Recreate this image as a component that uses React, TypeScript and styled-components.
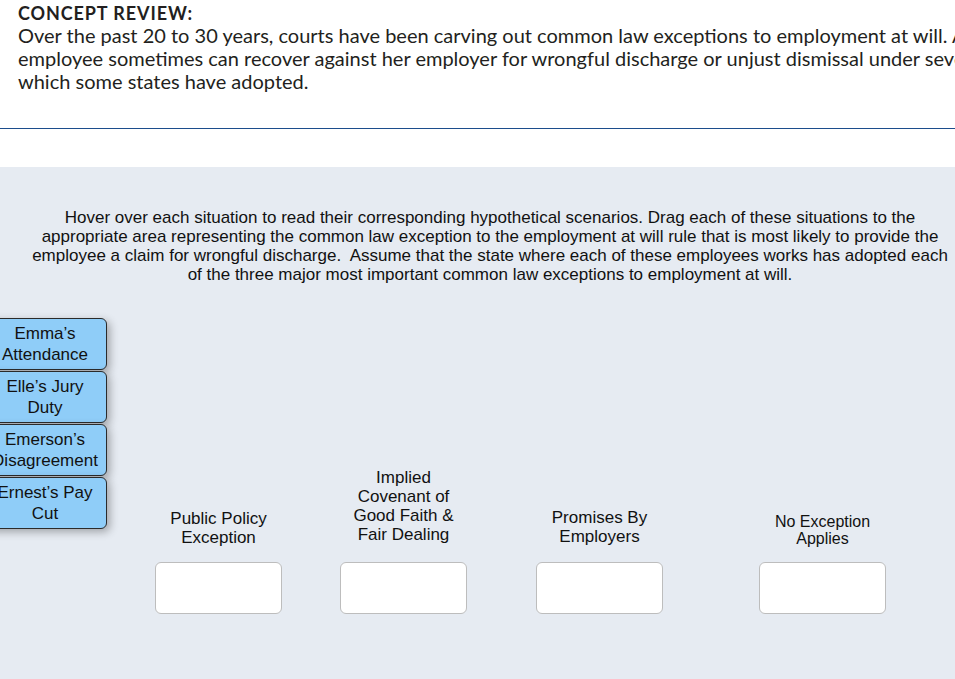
import styled, { createGlobalStyle } from "styled-components";

const GlobalStyle = createGlobalStyle`
  html, body { margin: 0; padding: 0; overflow: hidden; background: #fff; }
  #root { width: 980px; }
`;

const Page = styled.div`
  width: 980px;
  min-height: 100vh;
  display: flex;
  flex-direction: column;
`;

const Review = styled.section`
  padding: 2px 0 0 18px;
  font-family: Lato, "Open Sans", sans-serif;
  color: #231f20;
  white-space: nowrap;
  overflow: hidden;
`;

const ReviewTitle = styled.h3`
  margin: 0;
  font-size: 18px;
  line-height: 22px;
  font-weight: 700;
  letter-spacing: 0.9px;
`;

const ReviewText = styled.p`
  margin: 0;
  font-size: 20px;
  line-height: 23px;
`;

const Divider = styled.hr`
  margin: 35px 0 0;
  border: 0;
  border-top: 1px solid #1c4d8c;
  width: 955px;
`;

const Activity = styled.section`
  flex: 1;
  margin-top: 38px;
  background: #e6ebf2;
  padding-top: 41px;
  font-family: "Liberation Sans", Arial, sans-serif;
  color: #111;
`;

const Instructions = styled.p`
  margin: 0;
  text-align: center;
  font-size: 17px;
  line-height: 19px;
  white-space: nowrap;
`;

const Board = styled.div`
  display: flex;
  align-items: flex-start;
  margin-top: 34px;
`;

const TileStack = styled.div`
  display: flex;
  flex-direction: column;
  gap: 1px;
  margin-left: -17px;
  width: 124px;
`;

const Tile = styled.div`
  box-sizing: border-box;
  height: 52px;
  padding: 4px 4px 0;
  background: #8fcdf8;
  border: 1px solid #2b2b2b;
  border-radius: 6px;
  box-shadow: 3px 3px 8px rgba(0, 0, 0, 0.3);
  text-align: center;
  font-size: 17px;
  line-height: 21px;
  color: #111;
  white-space: nowrap;
`;

const DropColumn = styled.div<{ $offset: number; $gap: number }>`
  margin-left: ${(p) => p.$offset}px;
  width: 127px;
  height: 296px;
  display: flex;
  flex-direction: column;
  justify-content: flex-end;
  gap: ${(p) => p.$gap}px;
`;

const DropLabel = styled.div<{ $small?: boolean }>`
  text-align: center;
  font-size: ${(p) => (p.$small ? 16 : 17)}px;
  line-height: ${(p) => (p.$small ? 17 : 19)}px;
  white-space: nowrap;
`;

const DropBox = styled.div`
  box-sizing: border-box;
  height: 52px;
  background: #fff;
  border: 1px solid #bdbdbd;
  border-radius: 6px;
`;

const scenarios = [
  ["Emma’s", "Attendance"],
  ["Elle’s Jury", "Duty"],
  ["Emerson’s", "Disagreement"],
  ["Ernest’s Pay", "Cut"],
];

const targets = [
  { lines: ["Public Policy", "Exception"], offset: 48, gap: 15 },
  { lines: ["Implied", "Covenant of", "Good Faith &", "Fair Dealing"], offset: 58, gap: 18 },
  { lines: ["Promises By", "Employers"], offset: 69, gap: 16 },
  { lines: ["No Exception", "Applies"], offset: 96, gap: 15, small: true },
];

export default function App() {
  return (
    <Page>
      <GlobalStyle />
      <Review>
        <ReviewTitle>CONCEPT REVIEW:</ReviewTitle>
        <ReviewText>
          Over the past 20 to 30 years, courts have been carving out common law exceptions to employment at will. An
          <br />
          employee sometimes can recover against her employer for wrongful discharge or unjust dismissal under several theories,
          <br />
          which some states have adopted.
        </ReviewText>
      </Review>
      <Divider />
      <Activity>
        <Instructions>
          Hover over each situation to read their corresponding hypothetical scenarios. Drag each of these situations to the
          <br />
          appropriate area representing the common law exception to the employment at will rule that is most likely to provide the
          <br />
          employee a claim for wrongful discharge.&nbsp; Assume that the state where each of these employees works has adopted each
          <br />
          of the three major most important common law exceptions to employment at will.
        </Instructions>
        <Board>
          <TileStack>
            {scenarios.map(([a, b]) => (
              <Tile key={a}>
                {a}
                <br />
                {b}
              </Tile>
            ))}
          </TileStack>
          {targets.map((t) => (
            <DropColumn key={t.lines[0]} $offset={t.offset} $gap={t.gap}>
              <DropLabel $small={t.small}>
                {t.lines.map((l, i) => (
                  <div key={i}>{l}</div>
                ))}
              </DropLabel>
              <DropBox />
            </DropColumn>
          ))}
        </Board>
      </Activity>
    </Page>
  );
}
